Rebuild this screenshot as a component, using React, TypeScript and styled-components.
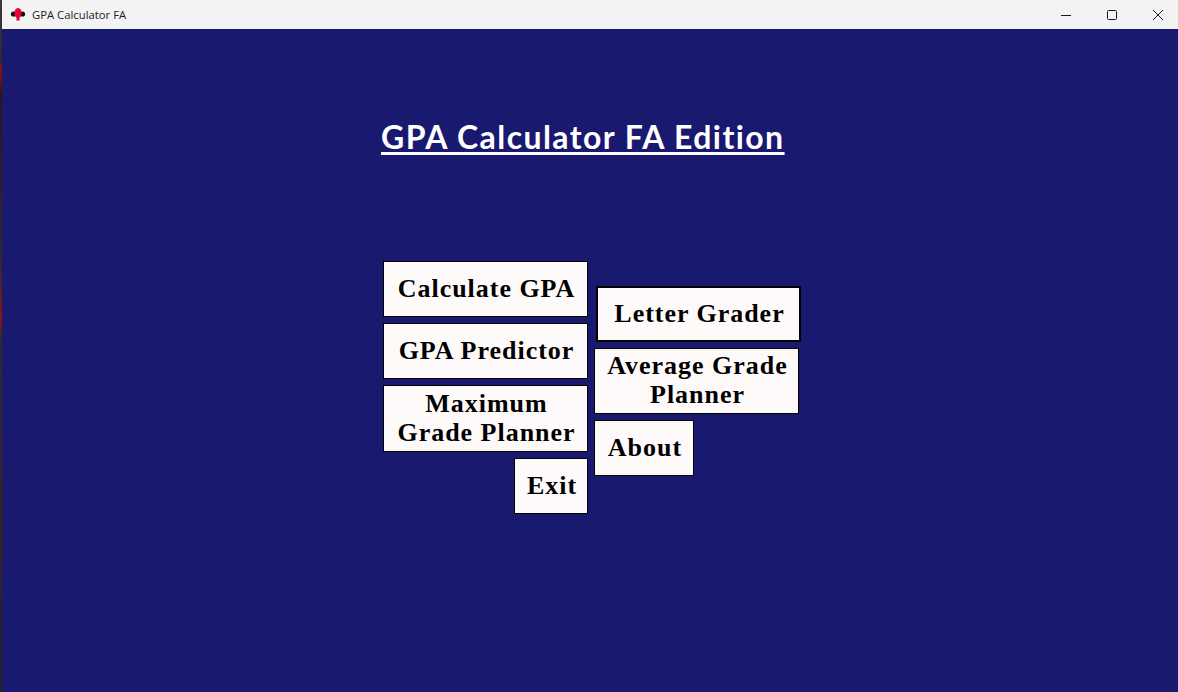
import React from "react";
import styled, { createGlobalStyle } from "styled-components";

const GlobalStyle = createGlobalStyle`
  html, body {
    margin: 0;
    padding: 0;
    height: 100%;
    overflow: hidden;
    background: #191970;
  }
`;

const Desktop = styled.div`
  display: flex;
  width: 1178px;
  height: 692px;
  overflow: hidden;
`;

// sliver of the desktop behind the window
const EdgeStrip = styled.div`
  width: 2px;
  flex: none;
  background: linear-gradient(
    180deg,
    #3a3a3a 0,
    #2a2a30 60px,
    #8a1218 70px,
    #30121c 95px,
    #2c2a30 260px,
    #7a1a20 320px,
    #2c2a30 340px,
    #33261e 500px,
    #222 692px
  );
`;

const Window = styled.div`
  flex: 1;
  display: flex;
  flex-direction: column;
  background: #191970;
`;

const TitleBar = styled.div`
  height: 29px;
  flex: none;
  display: flex;
  align-items: center;
  background: #f3f3f3;
  padding-left: 8px;
`;

const AppName = styled.span`
  margin-left: 6px;
  font-family: "Open Sans", "Liberation Sans", sans-serif;
  font-size: 11.3px;
  color: #1c1c1c;
`;

const Controls = styled.div`
  margin: 0 -3px 0 auto;
  display: flex;
  height: 100%;
`;

const ControlButton = styled.div`
  width: 46px;
  height: 100%;
  display: flex;
  align-items: center;
  justify-content: center;
`;

const Content = styled.main`
  flex: 1;
  padding: 88px 0 0 379px;
`;

const Heading = styled.h1`
  margin: 0;
  height: 40px;
  font-family: "Lato", "Liberation Sans", sans-serif;
  font-size: 32px;
  line-height: 40px;
  font-weight: 700;
  letter-spacing: 1.42px;
  color: #ffffff;
  text-decoration: underline;
  text-decoration-thickness: 3px;
  text-underline-offset: 3px;
  white-space: nowrap;
`;

const Menu = styled.div`
  display: flex;
  align-items: flex-start;
  gap: 6px;
  margin: 104px 0 0 2px;
`;

const Column = styled.div<{ $align: string; $top: number }>`
  display: flex;
  flex-direction: column;
  align-items: ${(p) => p.$align};
  gap: 6px;
  margin-top: ${(p) => p.$top}px;
`;

const MenuButton = styled.button<{ $w: number; $h?: number; $focused?: boolean }>`
  box-sizing: border-box;
  width: ${(p) => p.$w}px;
  height: ${(p) => p.$h ?? 56}px;
  margin-left: ${(p) => (p.$focused ? 2 : 0)}px;
  padding: 0 0 2px 2px;
  background: #fffafa;
  border: ${(p) => (p.$focused ? 2 : 1)}px solid #000000;
  color: #000000;
  font-family: "Liberation Serif", "DejaVu Serif", serif;
  font-size: 26px;
  font-weight: 700;
  line-height: 29px;
  letter-spacing: 0.98px;
  text-align: center;
  white-space: nowrap;
`;

const AppIcon = () => (
  <svg width="16" height="16" viewBox="0 0 16 16">
    <circle cx="3.500" cy="7" r="2.600" fill="#111" />
    <circle cx="12.500" cy="7" r="2.600" fill="#111" />
    <path d="M8 1c2.300 0 3.600 2.200 3.600 4.800 0 2.400-1.100 4.400-2.300 5.200l.5 2.500H6.200l.5-2.500C5.500 10.200 4.400 8.200 4.400 5.800 4.400 3.200 5.700 1 8 1z" fill="#e8003c" />
  </svg>
);

const App: React.FC = () => {
  return (
    <>
      <GlobalStyle />
      <Desktop>
        <EdgeStrip />
        <Window>
          <TitleBar>
            <AppIcon />
            <AppName>GPA Calculator FA</AppName>
            <Controls>
              <ControlButton>
                <svg width="12" height="12" viewBox="0 0 12 12">
                  <path d="M1 6.500h10" stroke="#1a1a1a" strokeWidth="1" />
                </svg>
              </ControlButton>
              <ControlButton>
                <svg width="12" height="12" viewBox="0 0 12 12">
                  <rect x="1.500" y="1.500" width="9" height="9" rx="1" fill="none" stroke="#1a1a1a" strokeWidth="1" />
                </svg>
              </ControlButton>
              <ControlButton>
                <svg width="12" height="12" viewBox="0 0 12 12">
                  <path d="M1 1l10 10M11 1L1 11" stroke="#1a1a1a" strokeWidth="1" />
                </svg>
              </ControlButton>
            </Controls>
          </TitleBar>
          <Content>
            <Heading>GPA Calculator FA Edition</Heading>
            <Menu>
              <Column $align="flex-end" $top={0}>
                <MenuButton $w={205}>Calculate GPA</MenuButton>
                <MenuButton $w={205}>GPA Predictor</MenuButton>
                <MenuButton $w={205} $h={67}>
                  Maximum
                  <br />
                  Grade Planner
                </MenuButton>
                <MenuButton $w={74}>Exit</MenuButton>
              </Column>
              <Column $align="flex-start" $top={25}>
                <MenuButton $w={205} $focused>
                  Letter Grader
                </MenuButton>
                <MenuButton $w={205} $h={66}>
                  Average Grade
                  <br />
                  Planner
                </MenuButton>
                <MenuButton $w={100}>About</MenuButton>
              </Column>
            </Menu>
          </Content>
        </Window>
      </Desktop>
    </>
  );
};

export default App;
